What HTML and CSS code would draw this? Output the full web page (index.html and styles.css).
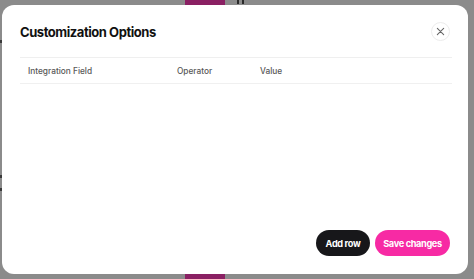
FILE: index.html
```html
<!DOCTYPE html>
<html>
<head>
<meta charset="utf-8">
<link rel="stylesheet" href="styles.css">
</head>
<body>
<div class="backdrop">
  <div class="bg-start-top"></div>
  <div class="bg-mark m1"></div>
  <div class="bg-mark m2"></div>
  <div class="bg-start-bottom"></div>
  <div class="bg-left a"></div>
  <div class="bg-left b"></div>
  <div class="bg-left c"></div>
</div>
<div class="modal">
  <div class="modal-head">
    <h1 class="title">Customization Options</h1>
    <button class="close" aria-label="Close">
      <svg width="9" height="9" viewBox="0 0 10 10"><path d="M1.5 1.5 L8.5 8.5 M8.5 1.5 L1.5 8.5" stroke="#666" stroke-width="1.2" stroke-linecap="round"/></svg>
    </button>
  </div>
  <div class="table">
    <div class="thead">
      <span class="col c1">Integration Field</span>
      <span class="col c2">Operator</span>
      <span class="col c3">Value</span>
    </div>
  </div>
  <div class="spacer"></div>
  <div class="footer">
    <button class="btn dark">Add row</button>
    <button class="btn pink">Save changes</button>
  </div>
</div>
</body>
</html>
```

FILE: styles.css
```css
html, body {
  margin: 0;
  padding: 0;
  width: 474px;
  height: 279px;
  overflow: hidden;
  background: #8b8b8b;
  font-family: Inter, "Noto Sans", "Liberation Sans", sans-serif;
}
body {
  position: relative;
  display: flex;
  padding: 5px 6px 5px 2px;
  box-sizing: border-box;
}
.backdrop { position: absolute; inset: 0; }
.bg-start-top {
  position: absolute; left: 185px; top: 0; width: 40px; height: 5px;
  background: #8a2063;
}
.bg-mark {
  position: absolute; top: 0; width: 2px; height: 4px; background: #2a2a2a;
}
.bg-mark.m1 { left: 237px; }
.bg-mark.m2 { left: 242px; }
.bg-start-bottom {
  position: absolute; left: 185px; top: 274px; width: 40px; height: 5px; background: #8a2063;
}
.bg-left { position: absolute; left: 0; width: 2px; height: 3px; background: #3a3a3a; }
.bg-left.a { top: 40px; }
.bg-left.b { top: 175px; }
.bg-left.c { top: 188px; }
.modal {
  position: relative;
  flex: 1;
  background: #fff;
  border-radius: 12px;
  display: flex;
  flex-direction: column;
  padding: 0 16px 18px 18px;
  box-sizing: border-box;
}
.modal-head {
  height: 52px;
  display: flex;
  align-items: center;
  justify-content: space-between;
  border-bottom: 1px solid #efefef;
}
.title {
  margin: 0;
  font-size: 13px;
  font-weight: 700;
  color: #111;
  letter-spacing: -0.45px;
  padding-top: 1px;
}
.close {
  width: 19px; height: 19px;
  border-radius: 50%;
  border: 1px solid #ececec;
  background: #fff;
  padding: 0;
  display: flex; align-items: center; justify-content: center;
  margin-right: 2px;
}
.thead {
  height: 25px;
  display: flex;
  align-items: center;
  border-bottom: 1px solid #f0f0f0;
  font-size: 8.3px;
  color: #585858;
  font-weight: 500;
}
.col.c1 { padding-left: 8px; width: 149px; }
.col.c2 { width: 83px; }
.spacer { flex: 1; }
.footer {
  display: flex;
  justify-content: flex-end;
  gap: 5px;
  padding-right: 2px;
}
.btn {
  height: 26px;
  border-radius: 13px;
  border: none;
  color: #fff;
  font-family: inherit;
  font-size: 9.2px;
  font-weight: 700;
  letter-spacing: -0.35px;
  padding: 0;
}
.btn.dark { background: #17171a; width: 54px; }
.btn.pink { background: #f72aa4; width: 75px; }
```
